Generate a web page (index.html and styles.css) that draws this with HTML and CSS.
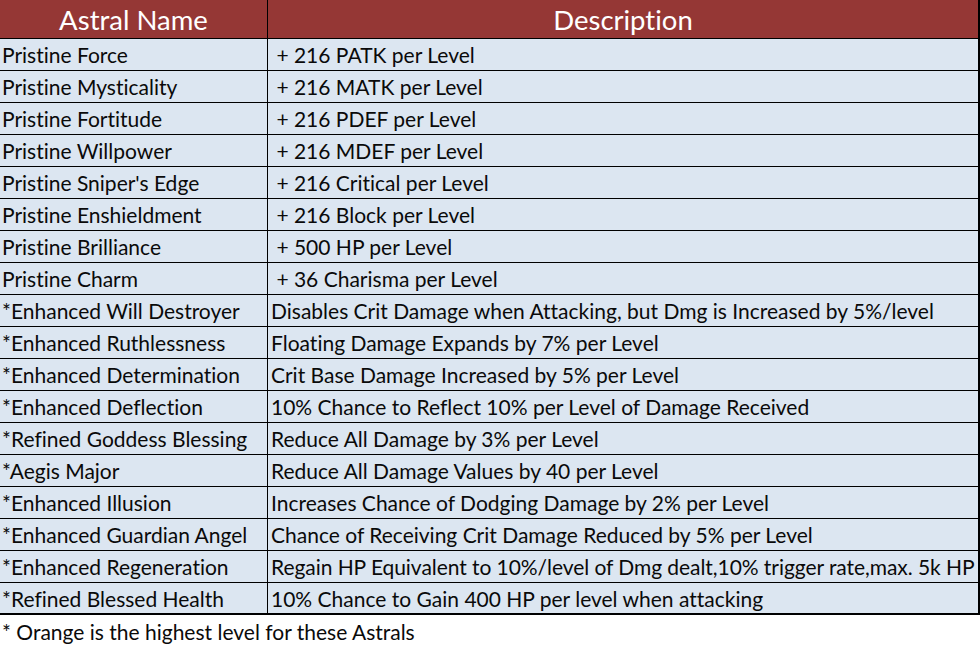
FILE: index.html
```html
<!DOCTYPE html>
<html>
<head>
<meta charset="utf-8">
<link rel="stylesheet" href="styles.css">
</head>
<body>
<div class="sheet">
  <div class="cell head name">Astral Name</div>
  <div class="cell head desc">Description</div>

  <div class="cell name">Pristine Force</div><div class="cell desc">&nbsp;+ 216 PATK per Level</div>
  <div class="cell name">Pristine Mysticality</div><div class="cell desc">&nbsp;+ 216 MATK per Level</div>
  <div class="cell name">Pristine Fortitude</div><div class="cell desc">&nbsp;+ 216 PDEF per Level</div>
  <div class="cell name">Pristine Willpower</div><div class="cell desc">&nbsp;+ 216 MDEF per Level</div>
  <div class="cell name">Pristine Sniper's Edge</div><div class="cell desc">&nbsp;+ 216 Critical per Level</div>
  <div class="cell name">Pristine Enshieldment</div><div class="cell desc">&nbsp;+ 216 Block per Level</div>
  <div class="cell name">Pristine Brilliance</div><div class="cell desc">&nbsp;+ 500 HP per Level</div>
  <div class="cell name">Pristine Charm</div><div class="cell desc">&nbsp;+ 36 Charisma per Level</div>
  <div class="cell name">*Enhanced Will Destroyer</div><div class="cell desc">Disables Crit Damage when Attacking, but Dmg is Increased by 5%/level</div>
  <div class="cell name">*Enhanced Ruthlessness</div><div class="cell desc">Floating Damage Expands by 7% per Level</div>
  <div class="cell name">*Enhanced Determination</div><div class="cell desc">Crit Base Damage Increased by 5% per Level</div>
  <div class="cell name">*Enhanced Deflection</div><div class="cell desc">10% Chance to Reflect 10% per Level of Damage Received</div>
  <div class="cell name">*Refined Goddess Blessing</div><div class="cell desc">Reduce All Damage by 3% per Level</div>
  <div class="cell name">*Aegis Major</div><div class="cell desc">Reduce All Damage Values by 40 per Level</div>
  <div class="cell name">*Enhanced Illusion</div><div class="cell desc">Increases Chance of Dodging Damage by 2% per Level</div>
  <div class="cell name">*Enhanced Guardian Angel</div><div class="cell desc">Chance of Receiving Crit Damage Reduced by 5% per Level</div>
  <div class="cell name">*Enhanced Regeneration</div><div class="cell desc tight">Regain HP Equivalent to 10%/level of Dmg dealt,10% trigger rate,max. 5k HP</div>
  <div class="cell name last">*Refined Blessed Health</div><div class="cell desc last">10% Chance to Gain 400 HP per level when attacking</div>
</div>
<p class="note">* Orange is the highest level for these Astrals</p>
</body>
</html>
```

FILE: styles.css
```css
html, body {
  margin: 0;
  padding: 0;
  background: #ffffff;
}
body {
  font-family: Lato, "Open Sans", sans-serif;
  font-variant-ligatures: none;
  color: #0a0a0a;
  width: 980px;
  height: 649px;
  overflow: hidden;
}
.sheet {
  display: grid;
  grid-template-columns: 268px 712px;
  width: 980px;
}
.cell {
  box-sizing: border-box;
  height: 32px;
  background: #dce6f1;
  border-bottom: 1px solid #000;
  font-size: 21px;
  line-height: 31px;
  white-space: nowrap;
  overflow: hidden;
  display: flex;
  align-items: center;
}
.cell.name {
  border-right: 1px solid #000;
  padding-left: 2px;
}
.cell.desc {
  border-right: 2px solid #000;
  padding-left: 3px;
}
.cell.tight {
  letter-spacing: -0.06px;
}
.cell.head {
  height: 39px;
  background: #953735;
  color: #ffffff;
  font-size: 27.5px;
  justify-content: center;
  padding-left: 0;
}
.cell.last {
  border-bottom-width: 2px;
}
.note {
  margin: 0;
  padding: 4px 0 0 2px;
  font-size: 21px;
  line-height: 26px;
}
```
